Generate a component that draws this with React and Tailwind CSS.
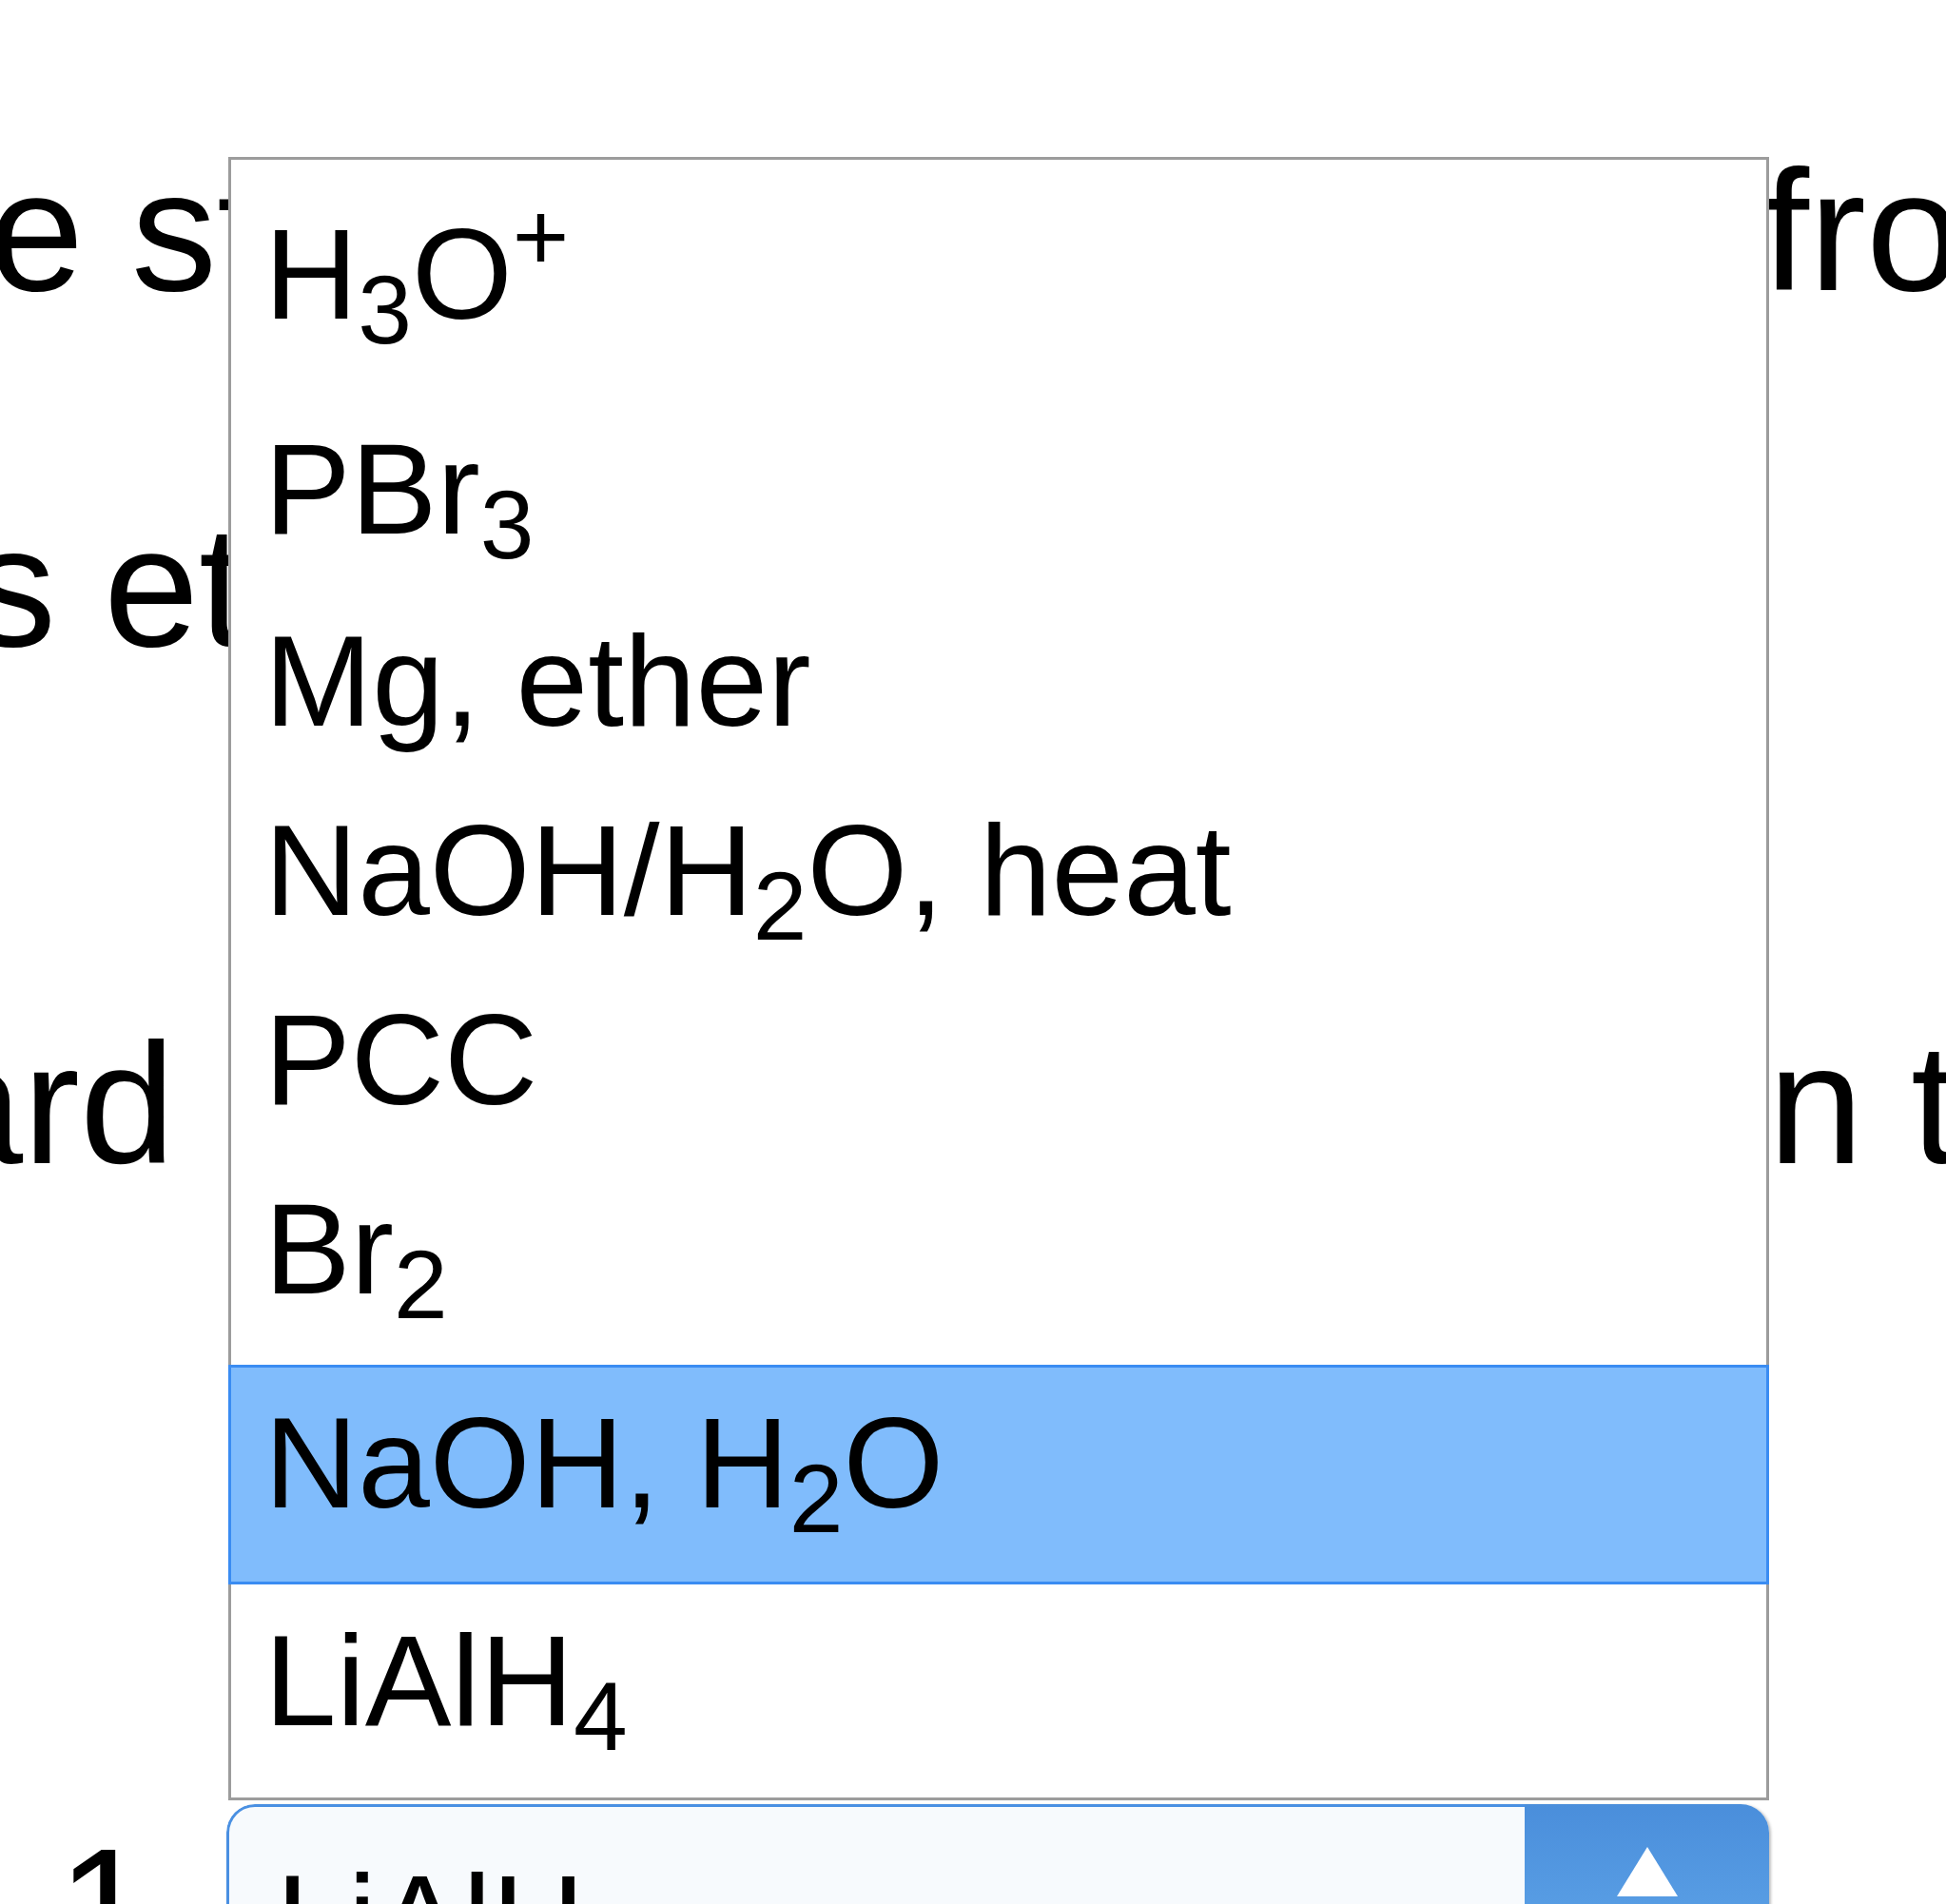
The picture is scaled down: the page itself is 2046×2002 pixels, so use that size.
import React from "react";

function Opt({ h, pt, children, active }) {
  if (active) {
    return (
      <div
        className={`-mx-[3px] border-[3px] border-[#3a8cf2] bg-[#80bcfc] pl-[35px] ${h} ${pt}`}
      >
        <div className="leading-none whitespace-nowrap">{children}</div>
      </div>
    );
  }
  return (
    <div className={`pl-[35px] ${h} ${pt}`}>
      <div className="leading-none whitespace-nowrap">{children}</div>
    </div>
  );
}

export default function App() {
  return (
    <div className="relative w-[2046px] h-[2002px] overflow-hidden bg-white text-black font-['Liberation_Sans',Arial,sans-serif]">
      {/* page text behind the open list */}
      <div className="flex flex-col text-[180px] leading-none whitespace-nowrap">
        <div className="mt-[153px] flex h-[180px]">
          <span className="-ml-[12px] w-[1864px] shrink-0 overflow-hidden">
            e steps needed to make the product
          </span>
          <span>from</span>
        </div>
        <div className="mt-[194px] flex h-[180px]">
          <span className="-ml-[31px] w-[1895px] shrink-0 overflow-hidden">
            s ether solvent is used
          </span>
        </div>
        <div className="mt-[364px] flex h-[180px]">
          <span className="-ml-[76px] w-[1935px] shrink-0 overflow-hidden">
            ard reagent is formed and the
          </span>
          <span>n treated</span>
        </div>
        <div className="mt-[646px] flex h-[200px] items-start">
          <div className="w-[238px] shrink-0 pl-[60px] pt-[20px]">1</div>
          <div className="flex h-[200px] w-[1622px] shrink-0 overflow-hidden rounded-t-[30px] shadow-[2px_1px_3px_rgba(0,0,0,0.25)]">
            <div className="flex-1 rounded-tl-[30px] border-[3px] border-r-0 border-b-0 border-[#4a90e2] bg-[#f7fafd] pl-[49px] pt-[51px] text-[136px] leading-none">
              LiAlH<sub>4</sub>
            </div>
            <div className="flex w-[257px] shrink-0 justify-center bg-gradient-to-b from-[#4a8edb] to-[#63a9eb] pt-[45px]">
              <svg width="64" height="52" viewBox="0 0 64 52">
                <polygon points="32,0 64,52 0,52" fill="#ffffff" />
              </svg>
            </div>
          </div>
        </div>
      </div>

      {/* open option list */}
      <div className="absolute left-[240px] top-[165px] w-[1620px] border-[3px] border-[#9c9c9c] bg-white text-[136px] flex flex-col">
        <Opt h="h-[242px]" pt="pt-[52px]">
          H<sub>3</sub>O<sup>+</sup>
        </Opt>
        <Opt h="h-[230px]" pt="pt-[36px]">
          PBr<sub>3</sub>
        </Opt>
        <Opt h="h-[170px]" pt="pt-[8px]">
          Mg, ether
        </Opt>
        <Opt h="h-[230px]" pt="pt-[37px]">
          NaOH/H<sub>2</sub>O, heat
        </Opt>
        <Opt h="h-[165px]" pt="pt-[6px]">
          PCC
        </Opt>
        <Opt h="h-[230px]" pt="pt-[40px]">
          Br<sub>2</sub>
        </Opt>
        <Opt h="h-[231px]" pt="pt-[32px]" active>
          NaOH, H<sub>2</sub>O
        </Opt>
        <Opt h="h-[224px]" pt="pt-[33px]">
          LiAlH<sub>4</sub>
        </Opt>
      </div>
    </div>
  );
}
